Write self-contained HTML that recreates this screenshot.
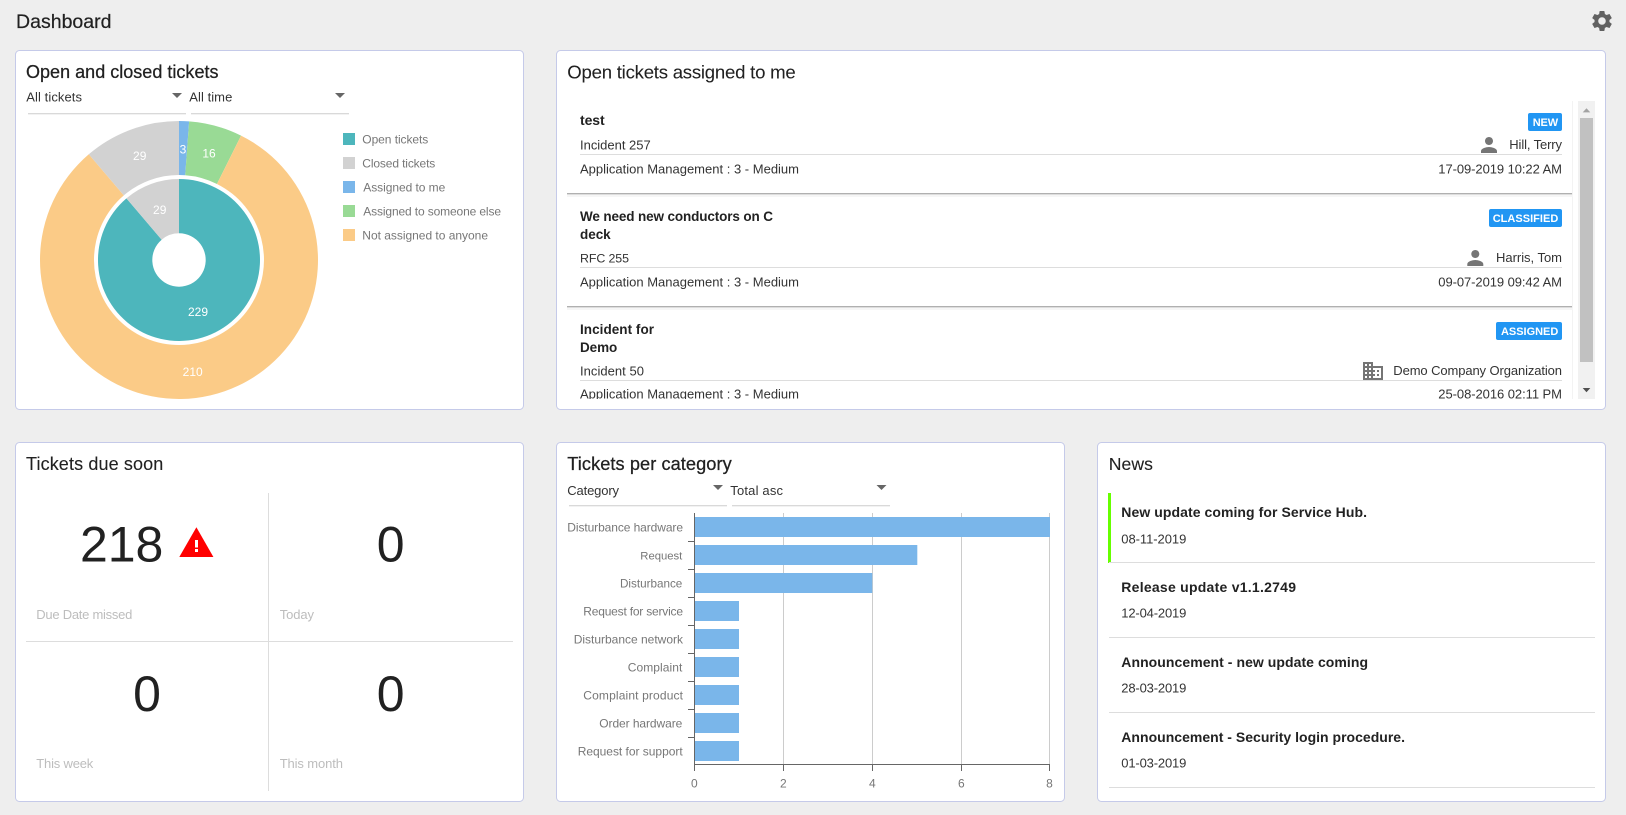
<!DOCTYPE html>
<html lang="en"><head><meta charset="utf-8"><title>Dashboard</title>
<style>
html,body{margin:0;padding:0;background:#eee;width:1626px;height:815px;overflow:hidden}
svg{display:block;position:absolute;left:0;top:0}
text{font-family:"Liberation Sans",sans-serif;font-size:13px;fill:#333}
.h{font-size:18px;fill:#212121;stroke:#212121;stroke-width:.15}
.t{font-size:14px;font-weight:700;fill:#222}
.t2{font-size:13.5px;font-weight:700;fill:#222}
.l{font-size:12px;fill:#777}
.p{font-size:12px;fill:#fff}
.b{font-size:11px;font-weight:700;fill:#fff}
.n{font-size:50px;fill:#212121}
.g{fill:#bdbdbd}
.card{fill:#fff;stroke:#c5cae9;stroke-width:1}
</style></head><body>
<svg width="1626" height="815" viewBox="0 0 1626 815" xmlns="http://www.w3.org/2000/svg">
<rect width="1626" height="815" fill="#eee"/>
<text x="16" y="28" textLength="95.5" style="font-size:19.5px;fill:#212121;stroke:#212121;stroke-width:.2">Dashboard</text>
<path transform="translate(1602,21) scale(1.04) translate(-12,-12)" fill="#616161" d="M19.14,12.94c0.04-0.3,0.06-0.61,0.06-0.94c0-0.32-0.02-0.64-0.07-0.94l2.03-1.58c0.18-0.14,0.23-0.41,0.12-0.61l-1.92-3.32c-0.12-0.22-0.37-0.29-0.59-0.22l-2.39,0.96c-0.5-0.38-1.03-0.7-1.62-0.94L14.4,2.81c-0.04-0.24-0.24-0.41-0.48-0.41h-3.84c-0.24,0-0.43,0.17-0.47,0.41L9.25,5.35C8.66,5.59,8.12,5.92,7.63,6.29L5.24,5.33c-0.22-0.08-0.47,0-0.59,0.22L2.74,8.87C2.62,9.08,2.66,9.34,2.86,9.48l2.03,1.58C4.84,11.36,4.8,11.69,4.8,12s0.02,0.64,0.07,0.94l-2.03,1.58c-0.18,0.14-0.23,0.41-0.12,0.61l1.92,3.32c0.12,0.22,0.37,0.29,0.59,0.22l2.39-0.96c0.5,0.38,1.03,0.7,1.62,0.94l0.36,2.54c0.05,0.24,0.24,0.41,0.48,0.41h3.84c0.24,0,0.44-0.17,0.47-0.41l0.36-2.54c0.59-0.24,1.13-0.56,1.62-0.94l2.39,0.96c0.22,0.08,0.47,0,0.59-0.22l1.92-3.32c0.12-0.22,0.07-0.47-0.12-0.61L19.14,12.94z M12,15.6c-1.98,0-3.6-1.62-3.6-3.6s1.62-3.6,3.6-3.6s3.6,1.62,3.6,3.6S13.98,15.6,12,15.6z"/>

<!-- Cards -->
<rect class="card" x="15.5" y="50.5" width="508" height="359" rx="4"/>
<rect class="card" x="556.5" y="50.5" width="1049" height="359" rx="4"/>
<rect class="card" x="15.5" y="442.5" width="508" height="359" rx="4"/>
<rect class="card" x="556.5" y="442.5" width="508" height="359" rx="4"/>
<rect class="card" x="1097.5" y="442.5" width="508" height="359" rx="4"/>

<!-- Open and closed tickets -->
<text class="h" x="26" y="78" textLength="192.5" style="stroke-width:.25">Open and closed tickets</text>
<text x="26.3" y="101.7" textLength="55.7">All tickets</text>
<path d="M172 93h10l-5 5z" fill="#666"/>
<rect x="28" y="113" width="158" height="1" fill="#d9d9d9"/><rect x="28" y="114" width="158" height="1" fill="#f2f2f2"/>
<text x="189.3" y="101.7" textLength="43">All time</text>
<path d="M335 93h10l-5 5z" fill="#666"/>
<rect x="191" y="113" width="158" height="1" fill="#d9d9d9"/><rect x="191" y="114" width="158" height="1" fill="#f2f2f2"/>

<path fill="#7ab6ea" d="M179 121A139 139 0 0 1 189.15 121.37L185.2 175.23A85 85 0 0 0 179 175Z"/>
<path fill="#99da95" d="M189.15 121.37A139 139 0 0 1 241.05 135.62L216.94 183.94A85 85 0 0 0 185.2 175.23Z"/>
<path fill="#fbcb87" d="M241.05 135.62A139 139 0 1 1 88.79 154.25L123.83 195.33A85 85 0 1 0 216.94 183.94Z"/>
<path fill="#d2d2d2" d="M88.79 154.25A139 139 0 0 1 179 121L179 175A85 85 0 0 0 123.83 195.33Z"/>
<path fill="#4db6bc" d="M179 179A81 81 0 1 1 126.43 198.37L161.67 239.69A26.7 26.7 0 1 0 179 233.3Z"/>
<path fill="#d2d2d2" d="M126.43 198.37A81 81 0 0 1 179 179L179 233.3A26.7 26.7 0 0 0 161.67 239.69Z"/>
<text class="p" x="183" y="153.3" text-anchor="middle">3</text>
<text class="p" x="209" y="157.3" text-anchor="middle">16</text>
<text class="p" x="139.7" y="160" text-anchor="middle">29</text>
<text class="p" x="159.7" y="214" text-anchor="middle">29</text>
<text class="p" x="198" y="316" text-anchor="middle">229</text>
<text class="p" x="192.7" y="376" text-anchor="middle">210</text>

<rect x="343" y="133" width="12" height="12" fill="#4db6bc"/>
<rect x="343" y="157" width="12" height="12" fill="#d2d2d2"/>
<rect x="343" y="181" width="12" height="12" fill="#7ab6ea"/>
<rect x="343" y="205" width="12" height="12" fill="#99da95"/>
<rect x="343" y="229" width="12" height="12" fill="#fbcb87"/>
<text class="l" x="362.3" y="143.7" textLength="66">Open tickets</text>
<text class="l" x="362.3" y="167.7" textLength="73">Closed tickets</text>
<text class="l" x="363.3" y="191.7" textLength="82">Assigned to me</text>
<text class="l" x="363.3" y="215.7" textLength="137.7">Assigned to someone else</text>
<text class="l" x="362.3" y="239.7" textLength="125.7">Not assigned to anyone</text>

<!-- Open tickets assigned to me -->
<text class="h" x="567.3" y="78.3" textLength="228.4" style="font-size:18.6px;stroke-width:.05">Open tickets assigned to me</text>

<rect x="1572" y="101" width="1" height="298" fill="#f3f3f3"/>
<text class="t" x="580" y="125" textLength="24.7">test</text>
<text x="580" y="149.3" textLength="70.7">Incident 257</text>
<rect x="580" y="154" width="982" height="1" fill="#ddd"/>
<text x="580" y="173.3" textLength="219">Application Management : 3 - Medium</text>
<rect x="567" y="193" width="1005" height="1" fill="#b0b0b0"/><rect x="567" y="194" width="1005" height="1" fill="#ddd"/><rect x="567" y="195" width="1006" height="2" fill="#f6f6f6"/>
<rect x="1528" y="113" width="34" height="18" rx="2" fill="#2196f3"/>
<text class="b" x="1532.7" y="126" textLength="25.5">NEW</text>
<path transform="translate(1477,133)" fill="#757575" d="M12 12c2.21 0 4-1.79 4-4s-1.79-4-4-4-4 1.79-4 4 1.79 4 4 4zm0 2c-2.67 0-8 1.34-8 4v2h16v-2c0-2.66-5.33-4-8-4z"/>
<text x="1509.3" y="149" textLength="52.7">Hill, Terry</text>
<text x="1438.3" y="173.3" textLength="123.7">17-09-2019 10:22 AM</text>

<text class="t2" x="580" y="221" textLength="193">We need new conductors on C</text>
<text class="t2" x="580" y="239" textLength="30.7">deck</text>
<text x="580" y="262.3" textLength="49" style="font-size:12.4px">RFC 255</text>
<rect x="580" y="267" width="982" height="1" fill="#ddd"/>
<text x="580" y="286.3" textLength="219">Application Management : 3 - Medium</text>
<rect x="567" y="306" width="1005" height="1" fill="#b0b0b0"/><rect x="567" y="307" width="1005" height="1" fill="#ddd"/><rect x="567" y="308" width="1006" height="2" fill="#f6f6f6"/>
<rect x="1489" y="209" width="73" height="18" rx="2" fill="#2196f3"/>
<text class="b" x="1492.7" y="222" textLength="65.6">CLASSIFIED</text>
<path transform="translate(1463.3,246)" fill="#757575" d="M12 12c2.21 0 4-1.79 4-4s-1.79-4-4-4-4 1.79-4 4 1.79 4 4 4zm0 2c-2.67 0-8 1.34-8 4v2h16v-2c0-2.66-5.33-4-8-4z"/>
<text x="1496" y="262" textLength="66">Harris, Tom</text>
<text x="1438.3" y="286.3" textLength="123.7">09-07-2019 09:42 AM</text>

<text class="t2" x="580" y="334" textLength="74">Incident for</text>
<text class="t2" x="580" y="352" textLength="37.3">Demo</text>
<text x="580" y="375.3" textLength="64">Incident 50</text>
<rect x="580" y="380" width="982" height="1" fill="#ddd"/>
<text x="580" y="398.3" textLength="219">Application Management : 3 - Medium</text>
<rect x="1496" y="322" width="66" height="18" rx="2" fill="#2196f3"/>
<text class="b" x="1501" y="335" textLength="57.3">ASSIGNED</text>
<path transform="translate(1361,359)" fill="#757575" d="M12 7V3H2v18h20V7H12zM6 19H4v-2h2v2zm0-4H4v-2h2v2zm0-4H4V9h2v2zm0-4H4V5h2v2zm4 12H8v-2h2v2zm0-4H8v-2h2v2zm0-4H8V9h2v2zm0-4H8V5h2v2zm10 12h-8v-2h2v-2h-2v-2h2v-2h-2V9h8v10zm-2-8h-2v2h2v-2zm0 4h-2v2h2v-2z"/>
<text x="1393.3" y="375" textLength="168.7">Demo Company Organization</text>
<text x="1438.3" y="398.3" textLength="123.7">25-08-2016 02:11 PM</text>
<rect x="560" y="399" width="1040" height="10" fill="#fff"/>

<rect x="1578" y="101" width="17" height="298" fill="#f1f1f1"/>
<rect x="1580" y="118" width="13" height="244" fill="#c1c1c1"/>
<path d="M1582.7 112.4h7.6l-3.800-4.200z" fill="#a3a3a3"/>
<path d="M1582.700 388h7.600l-3.800 4.200z" fill="#505050"/>

<!-- Tickets due soon -->
<text class="h" x="26" y="470" textLength="137.3" style="stroke-width:.1">Tickets due soon</text>
<rect x="268" y="493" width="1" height="298" fill="#ddd"/>
<rect x="26" y="641" width="487" height="1" fill="#ddd"/>
<text class="n" x="80" y="561.7" textLength="83.3">218</text>
<path d="M196.4 527.3L213.4 557H179.3Z" fill="#f00"/>
<rect x="195" y="540" width="3" height="7.5" fill="#fff"/><rect x="195" y="549" width="3" height="3" fill="#fff"/>
<text class="n" x="390.7" y="561.7" text-anchor="middle">0</text>
<text class="n" x="147" y="711" text-anchor="middle">0</text>
<text class="n" x="390.7" y="711" text-anchor="middle">0</text>
<text class="g" x="36.3" y="619" textLength="96">Due Date missed</text>
<text class="g" x="279.7" y="619" textLength="34.3">Today</text>
<text class="g" x="36.3" y="768" textLength="57">This week</text>
<text class="g" x="279.7" y="768" textLength="63.3">This month</text>

<!-- Tickets per category -->
<text class="h" x="567.3" y="470" textLength="164.4" style="font-size:18.2px;stroke-width:.25">Tickets per category</text>
<text x="567.3" y="495" textLength="51.7">Category</text>
<path d="M713 485h10l-5 5z" fill="#666"/>
<rect x="569" y="505" width="158" height="1" fill="#d9d9d9"/><rect x="569" y="506" width="158" height="1" fill="#f2f2f2"/>
<text x="730.3" y="495" textLength="52.7">Total asc</text>
<path d="M876.5 485h10l-5 5z" fill="#666"/>
<rect x="732" y="505" width="158" height="1" fill="#d9d9d9"/><rect x="732" y="506" width="158" height="1" fill="#f2f2f2"/>

<g fill="#ccc">
<rect x="783" y="513" width="1" height="252"/><rect x="872" y="513" width="1" height="252"/><rect x="961" y="513" width="1" height="252"/><rect x="1049" y="513" width="1" height="252"/>
</g>
<g fill="#7ab6ea">
<rect x="695" y="517" width="355" height="20"/>
<rect x="695" y="545" width="222.3" height="20"/>
<rect x="695" y="573" width="177.3" height="20"/>
<rect x="695" y="601" width="44" height="20"/>
<rect x="695" y="629" width="44" height="20"/>
<rect x="695" y="657" width="44" height="20"/>
<rect x="695" y="685" width="44" height="20"/>
<rect x="695" y="713" width="44" height="20"/>
<rect x="695" y="741" width="44" height="20"/>
</g>
<g fill="#666">
<rect x="694" y="513" width="1" height="252"/>
<rect x="694" y="764" width="356" height="1"/>
<rect x="688" y="541" width="6" height="1"/><rect x="688" y="569" width="6" height="1"/><rect x="688" y="597" width="6" height="1"/><rect x="688" y="625" width="6" height="1"/><rect x="688" y="653" width="6" height="1"/><rect x="688" y="681" width="6" height="1"/><rect x="688" y="709" width="6" height="1"/><rect x="688" y="737" width="6" height="1"/>
<rect x="694" y="765" width="1" height="6"/><rect x="783" y="765" width="1" height="6"/><rect x="872" y="765" width="1" height="6"/><rect x="961" y="765" width="1" height="6"/><rect x="1049" y="765" width="1" height="6"/>
</g>
<text class="l" x="567.3" y="531.7" textLength="115.7">Disturbance hardware</text>
<text class="l" x="640.3" y="559.7" textLength="42" style="font-size:11.3px">Request</text>
<text class="l" x="620" y="587.7" textLength="62.3" style="font-size:11.7px">Disturbance</text>
<text class="l" x="583.3" y="615.7" textLength="99.7">Request for service</text>
<text class="l" x="573.7" y="643.7" textLength="109.3">Disturbance network</text>
<text class="l" x="627.7" y="671.7" textLength="54.7">Complaint</text>
<text class="l" x="583.3" y="699.7" textLength="99.7">Complaint product</text>
<text class="l" x="599.3" y="727.7" textLength="83">Order hardware</text>
<text class="l" x="577.7" y="755.7" textLength="105">Request for support</text>
<text class="l" x="694.3" y="787.7" text-anchor="middle">0</text>
<text class="l" x="783.3" y="787.7" text-anchor="middle">2</text>
<text class="l" x="872.3" y="787.7" text-anchor="middle">4</text>
<text class="l" x="961.3" y="787.7" text-anchor="middle">6</text>
<text class="l" x="1049.5" y="787.7" text-anchor="middle">8</text>

<!-- News -->
<text class="h" x="1108.8" y="470" textLength="44.1" style="font-size:17.6px;stroke-width:.1">News</text>
<rect x="1108" y="493" width="3" height="70" fill="#6f0"/>
<text class="t" x="1121.3" y="517" textLength="245.7">New update coming for Service Hub.</text>
<text x="1121.3" y="543.3" textLength="65">08-11-2019</text>
<rect x="1109" y="562" width="486" height="1" fill="#ddd"/>
<text class="t" x="1121.3" y="592" textLength="174.7">Release update v1.1.2749</text>
<text x="1121.3" y="617.3" textLength="65">12-04-2019</text>
<rect x="1109" y="637" width="486" height="1" fill="#ddd"/>
<text class="t" x="1121.3" y="667" textLength="246.7">Announcement - new update coming</text>
<text x="1121.3" y="692.3" textLength="65">28-03-2019</text>
<rect x="1109" y="712" width="486" height="1" fill="#ddd"/>
<text class="t" x="1121.3" y="742" textLength="283.7">Announcement - Security login procedure.</text>
<text x="1121.3" y="767.3" textLength="65">01-03-2019</text>
<rect x="1109" y="787" width="486" height="1" fill="#ddd"/>
</svg>
</body></html>
